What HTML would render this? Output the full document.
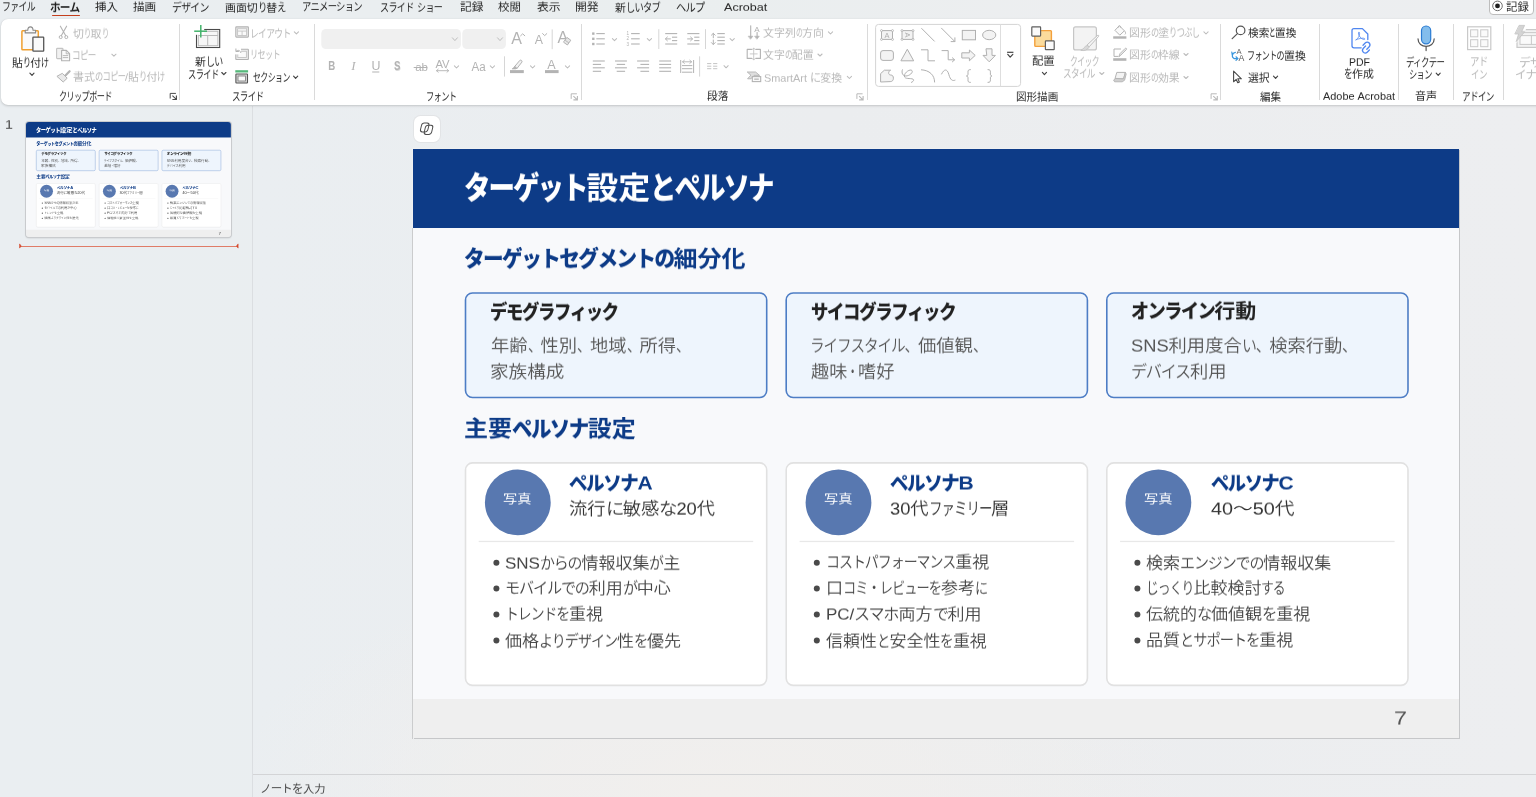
<!DOCTYPE html><html lang="ja"><head><meta charset="utf-8"><title>PowerPoint</title><style>
*{margin:0;padding:0;box-sizing:border-box}
html,body{width:1536px;height:797px;overflow:hidden}
body{position:relative;font-family:"Liberation Sans","Noto Sans CJK JP",sans-serif;background:linear-gradient(90deg,#eaeef1 0%,#eaeeef 45%,#edeef0 75%,#eceef0 100%);-webkit-font-smoothing:antialiased}
.t{position:absolute;white-space:nowrap;line-height:1;height:1em;will-change:transform}
.t b{font-weight:inherit;display:inline-block;white-space:nowrap}
.t b.n{letter-spacing:-.075em}
.t b i{font-style:normal;display:inline-block;white-space:nowrap;transform-origin:0 50%}
.a{position:absolute}
svg{position:absolute;overflow:visible}

#ribbon{left:1px;top:19px;width:1540px;height:85.5px;background:#fff;border-radius:7px 0 0 7px;box-shadow:0 1px 2.5px rgba(0,0,0,.17),0 0 1px rgba(0,0,0,.1)}
#canvas{left:252px;top:105px;width:1284px;height:692px;background:radial-gradient(ellipse 38% 34% at 36% 100%,#f1efed 0%,rgba(241,239,237,.6) 50%,rgba(241,239,237,0) 100%),linear-gradient(90deg,#eaeef1 0%,#ebedef 45%,#edeef0 100%)}
.sep{width:1px;background:#dadada;top:23.5px;height:76px}
.slide{width:1046.3px;height:588.8px;background:#f8f9fb;overflow:hidden}
.slide .hd{left:0;top:0;width:100%;height:78.6px;background:#0d3b87}
.slide .ft{left:0;top:549.7px;width:100%;height:40px;background:#efefef}
.seg{top:143.6px;width:302.8px;height:105.8px;background:#eef5fd;border:1.4px solid #4f7dc4;border-radius:7.5px}
.per{top:313.5px;width:302px;height:223.5px;background:#fff;border:1px solid #dcdcdc;border-radius:7.5px;box-shadow:0 1px 2px rgba(0,0,0,.08)}
.cir{width:65.8px;height:65.8px;border-radius:50%;background:#5878b0;top:320.6px}
.dv{height:1.2px;background:#e7e7e7;top:391.9px;width:274.5px}
.dot{width:6px;height:6px;border-radius:50%;background:#444}
</style></head><body><div class="a" id="canvas"></div><div class="a" style="left:251.5px;top:106px;width:1px;height:691px;background:#dbdee1"></div><div class="a" style="left:253px;top:774px;width:1283px;height:1px;background:#d3d4d6"></div><div class="a" id="ribbon"></div><div class="a sep" style="left:179.0px"></div><div class="a sep" style="left:313.8px"></div><div class="a sep" style="left:581.1px"></div><div class="a sep" style="left:866.5px"></div><div class="a sep" style="left:1219.7px"></div><div class="a sep" style="left:1319.0px"></div><div class="a sep" style="left:1398.0px"></div><div class="a sep" style="left:1452.7px"></div><div class="a sep" style="left:1502.9px"></div><div class="a" style="left:51.5px;top:14.5px;width:28.3px;height:1.7px;border-radius:.9px;background:#c43e1c"></div><div class="a" style="left:1488.5px;top:-4px;width:45px;height:19.4px;background:#fff;border:1px solid #bdbdbd;border-radius:4px"></div><div class="a" style="left:26.4px;top:122.0px;width:205.0px;height:115.4px;border-radius:3px;overflow:hidden;box-shadow:0 0 0 1px #c9cbce,0 1px 2px rgba(0,0,0,.2)"><div class="a slide" style="left:0;top:0;transform:scale(0.19593);transform-origin:0 0"><div class="a hd"></div><div class="a ft"></div><svg width="1046.3" height="588.8" viewBox="0 0 1046.3 588.8" style="left:0;top:0"><rect x="52.50" y="144.00" width="301.2" height="104.5" rx="7" fill="#eef5fd" stroke="#4d7dc5" stroke-width="1.6"/><rect x="52.50" y="315.10" width="301.2" height="222.4" rx="7" fill="#000" opacity=".05"/><rect x="52.50" y="313.90" width="301.2" height="222.4" rx="7" fill="#fff" stroke="#e1e1e1" stroke-width="1.6"/><rect x="373.20" y="144.00" width="301.2" height="104.5" rx="7" fill="#eef5fd" stroke="#4d7dc5" stroke-width="1.6"/><rect x="373.20" y="315.10" width="301.2" height="222.4" rx="7" fill="#000" opacity=".05"/><rect x="373.20" y="313.90" width="301.2" height="222.4" rx="7" fill="#fff" stroke="#e1e1e1" stroke-width="1.6"/><rect x="693.80" y="144.00" width="301.2" height="104.5" rx="7" fill="#eef5fd" stroke="#4d7dc5" stroke-width="1.6"/><rect x="693.80" y="315.10" width="301.2" height="222.4" rx="7" fill="#000" opacity=".05"/><rect x="693.80" y="313.90" width="301.2" height="222.4" rx="7" fill="#fff" stroke="#e1e1e1" stroke-width="1.6"/><circle cx="104.80" cy="353.40" r="32.9" fill="#5878b0"/><circle cx="425.50" cy="353.40" r="32.9" fill="#5878b0"/><circle cx="745.40" cy="353.40" r="32.9" fill="#5878b0"/><rect x="65.70" y="391.80" width="274.5" height="1.3" fill="#e8e8e8"/><rect x="386.60" y="391.80" width="274.5" height="1.3" fill="#e8e8e8"/><rect x="707.10" y="391.80" width="274.5" height="1.3" fill="#e8e8e8"/><circle cx="83.40" cy="413.70" r="3" fill="#4a4a4a"/><circle cx="83.40" cy="439.60" r="3" fill="#4a4a4a"/><circle cx="83.40" cy="465.50" r="3" fill="#4a4a4a"/><circle cx="83.40" cy="491.60" r="3" fill="#4a4a4a"/><circle cx="403.80" cy="413.70" r="3" fill="#4a4a4a"/><circle cx="403.80" cy="439.60" r="3" fill="#4a4a4a"/><circle cx="403.80" cy="465.50" r="3" fill="#4a4a4a"/><circle cx="403.80" cy="491.60" r="3" fill="#4a4a4a"/><circle cx="724.40" cy="413.70" r="3" fill="#4a4a4a"/><circle cx="724.40" cy="439.60" r="3" fill="#4a4a4a"/><circle cx="724.40" cy="465.50" r="3" fill="#4a4a4a"/><circle cx="724.40" cy="491.60" r="3" fill="#4a4a4a"/></svg><div class="t" style="left:51.37px;top:22.49px;font-size:32px;color:#ffffff;transform:scaleY(0.975);font-weight:700"><b class="n" style="width:122.36px;font-weight:900"><i style="transform:scaleX(0.8267)">ターゲット</i></b><b>設定</b><b class="n" style="width:122.36px;font-weight:900"><i style="transform:scaleX(0.8267)">とペルソナ</i></b></div><div class="t" style="left:51.73px;top:97.73px;font-size:24px;color:#0d3b87;transform:scaleY(0.93);font-weight:700"><b class="n" style="width:209.60px;font-weight:900"><i style="transform:scaleX(0.8583)">ターゲットセグメントの</i></b><b>細分化</b></div><div class="t" style="left:51.85px;top:268.06px;font-size:24px;color:#0d3b87;transform:scaleY(0.93);font-weight:700"><b>主要</b><b class="n" style="width:75.69px;font-weight:900"><i style="transform:scaleX(0.8523)">ペルソナ</i></b><b>設定</b></div><div class="t" style="left:77.86px;top:151.65px;font-size:21px;color:#222222;transform:scaleY(0.93);font-weight:700"><b class="n" style="width:127.88px;font-weight:900"><i style="transform:scaleX(0.8251)">デモグラフィック</i></b></div><div class="t" style="left:78.00px;top:187.85px;font-size:18.3px;color:#555555;transform:scaleY(0.93);font-weight:350"><b>年齢</b><b class="n" style="width:12.94px"><i style="transform:scaleX(0.7647)">、</i></b><b>性別</b><b class="n" style="width:12.94px"><i style="transform:scaleX(0.7647)">、</i></b><b>地域</b><b class="n" style="width:12.94px"><i style="transform:scaleX(0.7647)">、</i></b><b>所得</b><b class="n" style="width:12.94px"><i style="transform:scaleX(0.7647)">、</i></b></div><div class="t" style="left:77.35px;top:213.65px;font-size:18.3px;color:#555555;transform:scaleY(0.93);font-weight:350"><b style="width:74.47px"><i style="transform:scaleX(1.0183)">家族構成</i></b></div><div class="t" style="left:398.70px;top:151.62px;font-size:21px;color:#222222;transform:scaleY(0.93);font-weight:700"><b class="n" style="width:144.22px;font-weight:900"><i style="transform:scaleX(0.8269)">サイコグラフィック</i></b></div><div class="t" style="left:397.44px;top:187.92px;font-size:18.3px;color:#555555;transform:scaleY(0.93);font-weight:350"><b class="n" style="width:108.00px"><i style="transform:scaleX(0.7983)">ライフスタイル、</i></b><b>価値観</b><b class="n" style="width:13.51px"><i style="transform:scaleX(0.7983)">、</i></b></div><div class="t" style="left:398.95px;top:213.64px;font-size:18.3px;color:#555555;transform:scaleY(0.93);font-weight:350"><b style="width:36.34px"><i style="transform:scaleX(0.9940)">趣味</i></b><b class="n" style="width:10.43px"><i style="transform:scaleX(0.6163)">・</i></b><b style="width:36.34px"><i style="transform:scaleX(0.9940)">嗜好</i></b></div><div class="t" style="left:718.79px;top:151.34px;font-size:21px;color:#222222;transform:scaleY(0.93);font-weight:700"><b class="n" style="width:83.31px;font-weight:900"><i style="transform:scaleX(0.8578)">オンライン</i></b><b>行動</b></div><div class="t" style="left:718.84px;top:187.85px;font-size:18.3px;color:#555555;transform:scaleY(0.93);font-weight:350"><b>SNS利用度合</b><b class="n" style="width:27.54px"><i style="transform:scaleX(0.8140)">い、</i></b><b>検索行動</b><b class="n" style="width:13.77px"><i style="transform:scaleX(0.8140)">、</i></b></div><div class="t" style="left:718.55px;top:213.44px;font-size:18.3px;color:#555555;transform:scaleY(0.93);font-weight:350"><b class="n" style="width:58.97px"><i style="transform:scaleX(0.8789)">デバイス</i></b><b>利用</b></div><div class="t" style="left:156.50px;top:322.50px;font-size:21px;color:#0d3b87;transform:scaleY(0.93);font-weight:700"><b class="n" style="width:68.41px;font-weight:900"><i style="transform:scaleX(0.8804)">ペルソナ</i></b><b>A</b></div><div class="t" style="left:156.25px;top:350.95px;font-size:18.3px;color:#333333;transform:scaleY(0.93);font-weight:350"><b>流行</b><b class="n" style="width:17.16px"><i style="transform:scaleX(1.0138)">に</i></b><b>敏感</b><b class="n" style="width:17.16px"><i style="transform:scaleX(1.0138)">な</i></b><b>20代</b></div><div class="t" style="left:477.50px;top:322.50px;font-size:21px;color:#0d3b87;transform:scaleY(0.93);font-weight:700"><b class="n" style="width:68.39px;font-weight:900"><i style="transform:scaleX(0.8801)">ペルソナ</i></b><b>B</b></div><div class="t" style="left:477.46px;top:350.84px;font-size:18.3px;color:#333333;transform:scaleY(0.93);font-weight:350"><b>30代</b><b class="n" style="width:62.37px"><i style="transform:scaleX(0.7377)">ファミリー</i></b><b>層</b></div><div class="t" style="left:798.25px;top:322.49px;font-size:21px;color:#0d3b87;transform:scaleY(0.93);font-weight:700"><b class="n" style="width:67.38px;font-weight:900"><i style="transform:scaleX(0.8671)">ペルソナ</i></b><b>C</b></div><div class="t" style="left:798.49px;top:351.08px;font-size:18.3px;color:#333333;transform:scaleY(0.93);font-weight:350"><b style="width:83.65px"><i style="transform:scaleX(1.0831)">40～50代</i></b></div><div class="t" style="left:92.60px;top:405.50px;font-size:17px;color:#444444;transform:scaleY(0.93);font-weight:350"><b>SNS</b><b class="n" style="width:41.44px"><i style="transform:scaleX(0.8782)">からの</i></b><b>情報収集</b><b class="n" style="width:13.82px"><i style="transform:scaleX(0.8782)">が</i></b><b>主</b></div><div class="t" style="left:92.60px;top:431.07px;font-size:17px;color:#444444;transform:scaleY(0.93);font-weight:350"><b class="n" style="width:83.83px"><i style="transform:scaleX(0.8884)">モバイルでの</i></b><b>利用</b><b class="n" style="width:13.98px"><i style="transform:scaleX(0.8884)">が</i></b><b>中心</b></div><div class="t" style="left:92.60px;top:457.03px;font-size:17px;color:#444444;transform:scaleY(0.93);font-weight:350"><b class="n" style="width:64.06px"><i style="transform:scaleX(0.8148)">トレンドを</i></b><b>重視</b></div><div class="t" style="left:92.60px;top:483.42px;font-size:17px;color:#444444;transform:scaleY(0.93);font-weight:350"><b>価格</b><b class="n" style="width:78.04px"><i style="transform:scaleX(0.8301)">よりデザイン</i></b><b>性</b><b class="n" style="width:13.06px"><i style="transform:scaleX(0.8301)">を</i></b><b>優先</b></div><div class="t" style="left:413.20px;top:405.31px;font-size:17px;color:#444444;transform:scaleY(0.93);font-weight:350"><b class="n" style="width:129.17px"><i style="transform:scaleX(0.8232)">コストパフォーマンス</i></b><b>重視</b></div><div class="t" style="left:413.20px;top:431.31px;font-size:17px;color:#444444;transform:scaleY(0.93);font-weight:350"><b>口</b><b class="n" style="width:97.94px"><i style="transform:scaleX(0.7784)">コミ・レビューを</i></b><b>参考</b><b class="n" style="width:12.25px"><i style="transform:scaleX(0.7784)">に</i></b></div><div class="t" style="left:413.20px;top:457.00px;font-size:17px;color:#444444;transform:scaleY(0.93);font-weight:350"><b>PC/</b><b class="n" style="width:44.18px"><i style="transform:scaleX(0.9466)">スマホ</i></b><b>両方</b><b class="n" style="width:14.89px"><i style="transform:scaleX(0.9466)">で</i></b><b>利用</b></div><div class="t" style="left:413.20px;top:483.51px;font-size:17px;color:#444444;transform:scaleY(0.93);font-weight:350"><b>信頼性</b><b class="n" style="width:12.45px"><i style="transform:scaleX(0.7915)">と</i></b><b>安全性</b><b class="n" style="width:12.45px"><i style="transform:scaleX(0.7915)">を</i></b><b>重視</b></div><div class="t" style="left:733.80px;top:405.51px;font-size:17px;color:#444444;transform:scaleY(0.93);font-weight:350"><b>検索</b><b class="n" style="width:83.37px"><i style="transform:scaleX(0.8835)">エンジンでの</i></b><b>情報収集</b></div><div class="t" style="left:733.80px;top:431.32px;font-size:17px;color:#444444;transform:scaleY(0.93);font-weight:350"><b class="n" style="width:47.43px"><i style="transform:scaleX(0.7540)">じっくり</i></b><b>比較検討</b><b class="n" style="width:23.72px"><i style="transform:scaleX(0.7540)">する</i></b></div><div class="t" style="left:733.80px;top:457.14px;font-size:17px;color:#444444;transform:scaleY(0.93);font-weight:350"><b>伝統的</b><b class="n" style="width:14.12px"><i style="transform:scaleX(0.8973)">な</i></b><b>価値観</b><b class="n" style="width:14.12px"><i style="transform:scaleX(0.8973)">を</i></b><b>重視</b></div><div class="t" style="left:733.80px;top:483.31px;font-size:17px;color:#444444;transform:scaleY(0.93);font-weight:350"><b>品質</b><b class="n" style="width:79.29px"><i style="transform:scaleX(0.8403)">とサポートを</i></b><b>重視</b></div><div class="t" style="left:90.70px;top:342.85px;font-size:13px;color:#ffffff;transform:scaleY(0.93)"><b style="width:28.40px"><i style="transform:scaleX(1.0915)">写真</i></b></div><div class="t" style="left:411.20px;top:342.85px;font-size:13px;color:#ffffff;transform:scaleY(0.93)"><b style="width:28.40px"><i style="transform:scaleX(1.0915)">写真</i></b></div><div class="t" style="left:731.20px;top:342.85px;font-size:13px;color:#ffffff;transform:scaleY(0.93)"><b style="width:28.40px"><i style="transform:scaleX(1.0915)">写真</i></b></div><div class="t" style="left:981.56px;top:559.27px;font-size:20px;color:#555555;transform:scaleY(0.93);font-weight:350"><b style="width:12.98px"><i style="transform:scaleX(1.1664)">7</i></b></div></div></div><div class="a" style="left:20px;top:245.5px;width:217.6px;height:1.4px;background:#e07c68"></div><svg width="240" height="10" viewBox="0 0 240 10" style="left:0;top:241.2px"><path d="M19.6 2.9L21.2 5L19.6 7.100zM238.100 2.900L236.500 5L238.100 7.100z" fill="#d4472a" stroke="#d4472a" stroke-width=".6"/></svg><div class="a" style="left:413.8px;top:115.8px;width:26px;height:26.1px;background:#fff;border-radius:6.5px;box-shadow:0 0 0 1px #e2e4e6"></div><div class="a" style="left:412.5px;top:149.1px;width:1046.3px;height:588.8px;box-shadow:1px 1px 0 0 #c6c7c9,-1px -1px 0 0 #eff0f1"><div class="a slide" style="left:0;top:0"><div class="a hd"></div><div class="a ft"></div><svg width="1046.3" height="588.8" viewBox="0 0 1046.3 588.8" style="left:0;top:0"><rect x="52.50" y="144.00" width="301.2" height="104.5" rx="7" fill="#eef5fd" stroke="#4d7dc5" stroke-width="1.6"/><rect x="52.50" y="315.10" width="301.2" height="222.4" rx="7" fill="#000" opacity=".05"/><rect x="52.50" y="313.90" width="301.2" height="222.4" rx="7" fill="#fff" stroke="#e1e1e1" stroke-width="1.6"/><rect x="373.20" y="144.00" width="301.2" height="104.5" rx="7" fill="#eef5fd" stroke="#4d7dc5" stroke-width="1.6"/><rect x="373.20" y="315.10" width="301.2" height="222.4" rx="7" fill="#000" opacity=".05"/><rect x="373.20" y="313.90" width="301.2" height="222.4" rx="7" fill="#fff" stroke="#e1e1e1" stroke-width="1.6"/><rect x="693.80" y="144.00" width="301.2" height="104.5" rx="7" fill="#eef5fd" stroke="#4d7dc5" stroke-width="1.6"/><rect x="693.80" y="315.10" width="301.2" height="222.4" rx="7" fill="#000" opacity=".05"/><rect x="693.80" y="313.90" width="301.2" height="222.4" rx="7" fill="#fff" stroke="#e1e1e1" stroke-width="1.6"/><circle cx="104.80" cy="353.40" r="32.9" fill="#5878b0"/><circle cx="425.50" cy="353.40" r="32.9" fill="#5878b0"/><circle cx="745.40" cy="353.40" r="32.9" fill="#5878b0"/><rect x="65.70" y="391.80" width="274.5" height="1.3" fill="#e8e8e8"/><rect x="386.60" y="391.80" width="274.5" height="1.3" fill="#e8e8e8"/><rect x="707.10" y="391.80" width="274.5" height="1.3" fill="#e8e8e8"/><circle cx="83.40" cy="413.70" r="3" fill="#4a4a4a"/><circle cx="83.40" cy="439.60" r="3" fill="#4a4a4a"/><circle cx="83.40" cy="465.50" r="3" fill="#4a4a4a"/><circle cx="83.40" cy="491.60" r="3" fill="#4a4a4a"/><circle cx="403.80" cy="413.70" r="3" fill="#4a4a4a"/><circle cx="403.80" cy="439.60" r="3" fill="#4a4a4a"/><circle cx="403.80" cy="465.50" r="3" fill="#4a4a4a"/><circle cx="403.80" cy="491.60" r="3" fill="#4a4a4a"/><circle cx="724.40" cy="413.70" r="3" fill="#4a4a4a"/><circle cx="724.40" cy="439.60" r="3" fill="#4a4a4a"/><circle cx="724.40" cy="465.50" r="3" fill="#4a4a4a"/><circle cx="724.40" cy="491.60" r="3" fill="#4a4a4a"/></svg><div class="t" style="left:51.37px;top:22.49px;font-size:32px;color:#ffffff;transform:scaleY(0.975);font-weight:700"><b class="n" style="width:122.36px;font-weight:900"><i style="transform:scaleX(0.8267)">ターゲット</i></b><b>設定</b><b class="n" style="width:122.36px;font-weight:900"><i style="transform:scaleX(0.8267)">とペルソナ</i></b></div><div class="t" style="left:51.73px;top:97.73px;font-size:24px;color:#0d3b87;transform:scaleY(0.93);font-weight:700"><b class="n" style="width:209.60px;font-weight:900"><i style="transform:scaleX(0.8583)">ターゲットセグメントの</i></b><b>細分化</b></div><div class="t" style="left:51.85px;top:268.06px;font-size:24px;color:#0d3b87;transform:scaleY(0.93);font-weight:700"><b>主要</b><b class="n" style="width:75.69px;font-weight:900"><i style="transform:scaleX(0.8523)">ペルソナ</i></b><b>設定</b></div><div class="t" style="left:77.86px;top:151.65px;font-size:21px;color:#222222;transform:scaleY(0.93);font-weight:700"><b class="n" style="width:127.88px;font-weight:900"><i style="transform:scaleX(0.8251)">デモグラフィック</i></b></div><div class="t" style="left:78.00px;top:187.85px;font-size:18.3px;color:#555555;transform:scaleY(0.93);font-weight:350"><b>年齢</b><b class="n" style="width:12.94px"><i style="transform:scaleX(0.7647)">、</i></b><b>性別</b><b class="n" style="width:12.94px"><i style="transform:scaleX(0.7647)">、</i></b><b>地域</b><b class="n" style="width:12.94px"><i style="transform:scaleX(0.7647)">、</i></b><b>所得</b><b class="n" style="width:12.94px"><i style="transform:scaleX(0.7647)">、</i></b></div><div class="t" style="left:77.35px;top:213.65px;font-size:18.3px;color:#555555;transform:scaleY(0.93);font-weight:350"><b style="width:74.47px"><i style="transform:scaleX(1.0183)">家族構成</i></b></div><div class="t" style="left:398.70px;top:151.62px;font-size:21px;color:#222222;transform:scaleY(0.93);font-weight:700"><b class="n" style="width:144.22px;font-weight:900"><i style="transform:scaleX(0.8269)">サイコグラフィック</i></b></div><div class="t" style="left:397.44px;top:187.92px;font-size:18.3px;color:#555555;transform:scaleY(0.93);font-weight:350"><b class="n" style="width:108.00px"><i style="transform:scaleX(0.7983)">ライフスタイル、</i></b><b>価値観</b><b class="n" style="width:13.51px"><i style="transform:scaleX(0.7983)">、</i></b></div><div class="t" style="left:398.95px;top:213.64px;font-size:18.3px;color:#555555;transform:scaleY(0.93);font-weight:350"><b style="width:36.34px"><i style="transform:scaleX(0.9940)">趣味</i></b><b class="n" style="width:10.43px"><i style="transform:scaleX(0.6163)">・</i></b><b style="width:36.34px"><i style="transform:scaleX(0.9940)">嗜好</i></b></div><div class="t" style="left:718.79px;top:151.34px;font-size:21px;color:#222222;transform:scaleY(0.93);font-weight:700"><b class="n" style="width:83.31px;font-weight:900"><i style="transform:scaleX(0.8578)">オンライン</i></b><b>行動</b></div><div class="t" style="left:718.84px;top:187.85px;font-size:18.3px;color:#555555;transform:scaleY(0.93);font-weight:350"><b>SNS利用度合</b><b class="n" style="width:27.54px"><i style="transform:scaleX(0.8140)">い、</i></b><b>検索行動</b><b class="n" style="width:13.77px"><i style="transform:scaleX(0.8140)">、</i></b></div><div class="t" style="left:718.55px;top:213.44px;font-size:18.3px;color:#555555;transform:scaleY(0.93);font-weight:350"><b class="n" style="width:58.97px"><i style="transform:scaleX(0.8789)">デバイス</i></b><b>利用</b></div><div class="t" style="left:156.50px;top:322.50px;font-size:21px;color:#0d3b87;transform:scaleY(0.93);font-weight:700"><b class="n" style="width:68.41px;font-weight:900"><i style="transform:scaleX(0.8804)">ペルソナ</i></b><b>A</b></div><div class="t" style="left:156.25px;top:350.95px;font-size:18.3px;color:#333333;transform:scaleY(0.93);font-weight:350"><b>流行</b><b class="n" style="width:17.16px"><i style="transform:scaleX(1.0138)">に</i></b><b>敏感</b><b class="n" style="width:17.16px"><i style="transform:scaleX(1.0138)">な</i></b><b>20代</b></div><div class="t" style="left:477.50px;top:322.50px;font-size:21px;color:#0d3b87;transform:scaleY(0.93);font-weight:700"><b class="n" style="width:68.39px;font-weight:900"><i style="transform:scaleX(0.8801)">ペルソナ</i></b><b>B</b></div><div class="t" style="left:477.46px;top:350.84px;font-size:18.3px;color:#333333;transform:scaleY(0.93);font-weight:350"><b>30代</b><b class="n" style="width:62.37px"><i style="transform:scaleX(0.7377)">ファミリー</i></b><b>層</b></div><div class="t" style="left:798.25px;top:322.49px;font-size:21px;color:#0d3b87;transform:scaleY(0.93);font-weight:700"><b class="n" style="width:67.38px;font-weight:900"><i style="transform:scaleX(0.8671)">ペルソナ</i></b><b>C</b></div><div class="t" style="left:798.49px;top:351.08px;font-size:18.3px;color:#333333;transform:scaleY(0.93);font-weight:350"><b style="width:83.65px"><i style="transform:scaleX(1.0831)">40～50代</i></b></div><div class="t" style="left:92.60px;top:405.50px;font-size:17px;color:#444444;transform:scaleY(0.93);font-weight:350"><b>SNS</b><b class="n" style="width:41.44px"><i style="transform:scaleX(0.8782)">からの</i></b><b>情報収集</b><b class="n" style="width:13.82px"><i style="transform:scaleX(0.8782)">が</i></b><b>主</b></div><div class="t" style="left:92.60px;top:431.07px;font-size:17px;color:#444444;transform:scaleY(0.93);font-weight:350"><b class="n" style="width:83.83px"><i style="transform:scaleX(0.8884)">モバイルでの</i></b><b>利用</b><b class="n" style="width:13.98px"><i style="transform:scaleX(0.8884)">が</i></b><b>中心</b></div><div class="t" style="left:92.60px;top:457.03px;font-size:17px;color:#444444;transform:scaleY(0.93);font-weight:350"><b class="n" style="width:64.06px"><i style="transform:scaleX(0.8148)">トレンドを</i></b><b>重視</b></div><div class="t" style="left:92.60px;top:483.42px;font-size:17px;color:#444444;transform:scaleY(0.93);font-weight:350"><b>価格</b><b class="n" style="width:78.04px"><i style="transform:scaleX(0.8301)">よりデザイン</i></b><b>性</b><b class="n" style="width:13.06px"><i style="transform:scaleX(0.8301)">を</i></b><b>優先</b></div><div class="t" style="left:413.20px;top:405.31px;font-size:17px;color:#444444;transform:scaleY(0.93);font-weight:350"><b class="n" style="width:129.17px"><i style="transform:scaleX(0.8232)">コストパフォーマンス</i></b><b>重視</b></div><div class="t" style="left:413.20px;top:431.31px;font-size:17px;color:#444444;transform:scaleY(0.93);font-weight:350"><b>口</b><b class="n" style="width:97.94px"><i style="transform:scaleX(0.7784)">コミ・レビューを</i></b><b>参考</b><b class="n" style="width:12.25px"><i style="transform:scaleX(0.7784)">に</i></b></div><div class="t" style="left:413.20px;top:457.00px;font-size:17px;color:#444444;transform:scaleY(0.93);font-weight:350"><b>PC/</b><b class="n" style="width:44.18px"><i style="transform:scaleX(0.9466)">スマホ</i></b><b>両方</b><b class="n" style="width:14.89px"><i style="transform:scaleX(0.9466)">で</i></b><b>利用</b></div><div class="t" style="left:413.20px;top:483.51px;font-size:17px;color:#444444;transform:scaleY(0.93);font-weight:350"><b>信頼性</b><b class="n" style="width:12.45px"><i style="transform:scaleX(0.7915)">と</i></b><b>安全性</b><b class="n" style="width:12.45px"><i style="transform:scaleX(0.7915)">を</i></b><b>重視</b></div><div class="t" style="left:733.80px;top:405.51px;font-size:17px;color:#444444;transform:scaleY(0.93);font-weight:350"><b>検索</b><b class="n" style="width:83.37px"><i style="transform:scaleX(0.8835)">エンジンでの</i></b><b>情報収集</b></div><div class="t" style="left:733.80px;top:431.32px;font-size:17px;color:#444444;transform:scaleY(0.93);font-weight:350"><b class="n" style="width:47.43px"><i style="transform:scaleX(0.7540)">じっくり</i></b><b>比較検討</b><b class="n" style="width:23.72px"><i style="transform:scaleX(0.7540)">する</i></b></div><div class="t" style="left:733.80px;top:457.14px;font-size:17px;color:#444444;transform:scaleY(0.93);font-weight:350"><b>伝統的</b><b class="n" style="width:14.12px"><i style="transform:scaleX(0.8973)">な</i></b><b>価値観</b><b class="n" style="width:14.12px"><i style="transform:scaleX(0.8973)">を</i></b><b>重視</b></div><div class="t" style="left:733.80px;top:483.31px;font-size:17px;color:#444444;transform:scaleY(0.93);font-weight:350"><b>品質</b><b class="n" style="width:79.29px"><i style="transform:scaleX(0.8403)">とサポートを</i></b><b>重視</b></div><div class="t" style="left:90.70px;top:342.85px;font-size:13px;color:#ffffff;transform:scaleY(0.93)"><b style="width:28.40px"><i style="transform:scaleX(1.0915)">写真</i></b></div><div class="t" style="left:411.20px;top:342.85px;font-size:13px;color:#ffffff;transform:scaleY(0.93)"><b style="width:28.40px"><i style="transform:scaleX(1.0915)">写真</i></b></div><div class="t" style="left:731.20px;top:342.85px;font-size:13px;color:#ffffff;transform:scaleY(0.93)"><b style="width:28.40px"><i style="transform:scaleX(1.0915)">写真</i></b></div><div class="t" style="left:981.56px;top:559.27px;font-size:20px;color:#555555;transform:scaleY(0.93);font-weight:350"><b style="width:12.98px"><i style="transform:scaleX(1.1664)">7</i></b></div></div></div><div class="a" style="left:411.5px;top:227.7px;width:1px;height:511.2px;background:#cbcccd"></div><svg width="1536" height="150" viewBox="0 0 1536 150" style="left:0;top:0"><rect x="21.90" y="30.80" width="16.40" height="18.90" rx="0.80" fill="#fafafa" stroke="#f0a030" stroke-width="1.50"/><path d="M25.2 32.9V30.2h2.6c0-2 1.1-3.3 2.6-3.3s2.6 1.3 2.6 3.3h2.6v2.7z" fill="#fafafa" stroke="#8a8a8a" stroke-width="1.10" stroke-linejoin="round" stroke-linecap="round" /><rect x="32.90" y="37.20" width="10.80" height="14.00" rx="0.60" fill="#fafafa" stroke="#555" stroke-width="1.30"/><path d="M29.9 73.2L32.0 75.4L34.0 73.2" fill="none" stroke="#444" stroke-width="1.15" stroke-linecap="round" stroke-linejoin="round"/><path d="M60.4 26.2L65.6 35.6M66.6 26.2L61.4 35.6" fill="none" stroke="#b3b3b3" stroke-width="1.10" stroke-linejoin="round" stroke-linecap="round" /><circle cx="60.7" cy="37.1" r="1.5" fill="none" stroke="#b3b3b3" stroke-width="1"/><circle cx="66.3" cy="37.1" r="1.5" fill="none" stroke="#b3b3b3" stroke-width="1"/><rect x="56.60" y="48.40" width="6.40" height="10.20" rx="0.80" fill="#f1f1f1" stroke="#c4c4c4" stroke-width="1.10"/><path d="M61.6 50.4h4.8l3.2 3.2v7.2h-8z" fill="#fafafa" stroke="#b3b3b3" stroke-width="1.10" stroke-linejoin="round" stroke-linecap="round" /><path d="M66.2 50.6v3.2h3.2M63.2 55.6h4.6M63.2 57.6h4.6" fill="none" stroke="#b3b3b3" stroke-width="0.90" stroke-linejoin="round" stroke-linecap="round" /><path d="M111.8 54.2L113.9 56.2L116.0 54.2" fill="none" stroke="#bcbcbc" stroke-width="1.05" stroke-linecap="round" stroke-linejoin="round"/><path d="M69.6 71.2l-4.4 4.6" fill="none" stroke="#b3b3b3" stroke-width="2.20" stroke-linejoin="round" stroke-linecap="round" /><path d="M62.6 73.6l4.6 4.6l-4 3.8l-6-5.4z" fill="#e9e9e9" stroke="#b3b3b3" stroke-width="1.00" stroke-linejoin="round" stroke-linecap="round" /><path d="M170.2 98.5V93.4H175.9" fill="none" stroke="#4a4a4a" stroke-width="1"/><path d="M172.4 95.7L176.3 99.4M176.4 95.5V99.5H172.4" fill="none" stroke="#4a4a4a" stroke-width="1.1"/><rect x="196.50" y="29.50" width="23.20" height="18.00" rx="0.00" fill="#fff" stroke="#4a4a4a" stroke-width="1.10"/><rect x="198.30" y="31.30" width="19.60" height="14.40" rx="0.00" fill="#f6f6f6" stroke="#b9b9b9" stroke-width="1.00"/><path d="M198.30 35.50L217.90 35.50" stroke="#b9b9b9" stroke-width="1.00" stroke-linecap="butt" fill="none"/><path d="M207.70 35.50L207.70 45.70" stroke="#b9b9b9" stroke-width="1.00" stroke-linecap="butt" fill="none"/><rect x="193.6" y="24.6" width="10.6" height="10.2" fill="#fff"/><path d="M194.20 31.20L207.00 31.20" stroke="#43b36b" stroke-width="1.50" stroke-linecap="butt" fill="none"/><path d="M200.80 25.00L200.80 37.60" stroke="#43b36b" stroke-width="1.50" stroke-linecap="butt" fill="none"/><path d="M221.8 72.5L223.8 74.7L225.9 72.5" fill="none" stroke="#444" stroke-width="1.15" stroke-linecap="round" stroke-linejoin="round"/><rect x="235.80" y="26.90" width="12.60" height="10.20" rx="0.60" fill="#ededed" stroke="#b3b3b3" stroke-width="1.10"/><rect x="237.60" y="28.70" width="9.00" height="6.80" rx="0.00" fill="#fafafa" stroke="#c4c4c4" stroke-width="0.90"/><path d="M237.60 31.10L246.60 31.10" stroke="#c4c4c4" stroke-width="0.90" stroke-linecap="butt" fill="none"/><path d="M242.10 31.10L242.10 35.50" stroke="#c4c4c4" stroke-width="0.90" stroke-linecap="butt" fill="none"/><path d="M294.3 31.8L296.4 33.9L298.5 31.8" fill="none" stroke="#bcbcbc" stroke-width="1.05" stroke-linecap="round" stroke-linejoin="round"/><rect x="235.80" y="49.30" width="12.60" height="10.20" rx="0.60" fill="#ededed" stroke="#b3b3b3" stroke-width="1.10"/><rect x="237.80" y="51.30" width="8.60" height="6.20" rx="0.00" fill="#fafafa" stroke="#c4c4c4" stroke-width="0.90"/><rect x="234.6" y="47.8" width="6.4" height="6.6" fill="#fff"/><path d="M236.2 51.2c1.6-1.6 4-1 4.6 1.4M235.9 48.9v2.6h2.6" fill="none" stroke="#b3b3b3" stroke-width="1.00" stroke-linejoin="round" stroke-linecap="round" /><rect x="235.3" y="70.2" width="12.8" height="2.3" fill="#55b87a"/><rect x="235.90" y="74.00" width="11.60" height="9.00" rx="0.50" fill="#d9d9d9" stroke="#555" stroke-width="1.10"/><rect x="238.00" y="76.00" width="7.40" height="5.00" rx="0.00" fill="#fafafa" stroke="#777" stroke-width="0.80"/><path d="M293.6 76.2L295.6 78.4L297.7 76.2" fill="none" stroke="#444" stroke-width="1.15" stroke-linecap="round" stroke-linejoin="round"/><rect x="321.30" y="28.90" width="139.60" height="20.20" rx="4.50" fill="#f0f0f0" stroke="none" stroke-width="0.00"/><rect x="462.30" y="28.90" width="43.60" height="20.20" rx="4.50" fill="#f0f0f0" stroke="none" stroke-width="0.00"/><path d="M452.4 37.8L454.9 40.6L457.4 37.8" fill="none" stroke="#bdbdbd" stroke-width="1.00" stroke-linecap="round" stroke-linejoin="round"/><path d="M497.5 37.8L500.0 40.6L502.5 37.8" fill="none" stroke="#bdbdbd" stroke-width="1.00" stroke-linecap="round" stroke-linejoin="round"/><text x="511.20" y="43.60" font-size="16.00" fill="#b3b3b3" font-weight="400" font-family="Liberation Sans,sans-serif" font-style="normal" text-anchor="start" >A</text><path d="M520.6 35.8l2.1-2l2.1 2" fill="none" stroke="#b3b3b3" stroke-width="1.00" stroke-linejoin="round" stroke-linecap="round" /><text x="534.70" y="43.60" font-size="12.30" fill="#b3b3b3" font-weight="400" font-family="Liberation Sans,sans-serif" font-style="normal" text-anchor="start" >A</text><path d="M542.6 33.6l2.1 2l2.1-2" fill="none" stroke="#b3b3b3" stroke-width="1.00" stroke-linejoin="round" stroke-linecap="round" /><path d="M552.20 29.40L552.20 49.20" stroke="#d6d6d6" stroke-width="1.00" stroke-linecap="butt" fill="none"/><text x="557.40" y="43.40" font-size="16.00" fill="#b3b3b3" font-weight="400" font-family="Liberation Sans,sans-serif" font-style="normal" text-anchor="start" >A</text><path d="M567.2 37.6l3.6 2.6l-3.4 4.8l-3.6-2.6z" fill="#e6e6e6" stroke="#b3b3b3" stroke-width="1.00" stroke-linejoin="round" stroke-linecap="round" /><path d="M565.20 40.30L568.90 42.90" stroke="#b3b3b3" stroke-width="0.90" stroke-linecap="butt" fill="none"/><text x="328.20" y="70.40" font-size="12.60" fill="#b3b3b3" font-weight="700" font-family="Liberation Sans,sans-serif" font-style="normal" text-anchor="start" textLength="7" lengthAdjust="spacingAndGlyphs">B</text><text x="351.20" y="70.40" font-size="13.00" fill="#b3b3b3" font-weight="400" font-family="Liberation Serif,sans-serif" font-style="italic" text-anchor="start" >I</text><text x="371.60" y="70.20" font-size="12.40" fill="#b3b3b3" font-weight="400" font-family="Liberation Sans,sans-serif" font-style="normal" text-anchor="start" >U</text><path d="M372.20 72.00L379.30 72.00" stroke="#b3b3b3" stroke-width="1.00" stroke-linecap="butt" fill="none"/><text x="394.60" y="70.90" font-size="12.60" fill="#dcdcdc" font-weight="700" font-family="Liberation Sans,sans-serif" font-style="normal" text-anchor="start" textLength="6.4" lengthAdjust="spacingAndGlyphs">S</text><text x="394.10" y="70.40" font-size="12.60" fill="#b3b3b3" font-weight="700" font-family="Liberation Sans,sans-serif" font-style="normal" text-anchor="start" textLength="6.4" lengthAdjust="spacingAndGlyphs">S</text><text x="415.20" y="70.60" font-size="11.50" fill="#b3b3b3" font-weight="400" font-family="Liberation Sans,sans-serif" font-style="normal" text-anchor="start" >ab</text><path d="M413.70 67.50L427.30 67.50" stroke="#b3b3b3" stroke-width="1.00" stroke-linecap="butt" fill="none"/><text x="435.40" y="67.90" font-size="10.60" fill="#b3b3b3" font-weight="400" font-family="Liberation Sans,sans-serif" font-style="normal" text-anchor="start" textLength="14.2" lengthAdjust="spacingAndGlyphs">AV</text><path d="M436.6 70.7h12M438.2 69.2l-1.7 1.5l1.7 1.5M447 69.2l1.7 1.5l-1.7 1.5" fill="none" stroke="#b3b3b3" stroke-width="0.90" stroke-linejoin="round" stroke-linecap="round" /><path d="M454.4 65.9L456.5 68.0L458.6 65.9" fill="none" stroke="#bcbcbc" stroke-width="1.05" stroke-linecap="round" stroke-linejoin="round"/><text x="471.60" y="70.80" font-size="12.00" fill="#b3b3b3" font-weight="400" font-family="Liberation Sans,sans-serif" font-style="normal" text-anchor="start" textLength="14.2" lengthAdjust="spacingAndGlyphs">Aa</text><path d="M490.3 65.9L492.4 68.0L494.5 65.9" fill="none" stroke="#bcbcbc" stroke-width="1.05" stroke-linecap="round" stroke-linejoin="round"/><path d="M504.50 56.30L504.50 76.60" stroke="#d6d6d6" stroke-width="1.00" stroke-linecap="butt" fill="none"/><rect x="510" y="70.1" width="13.8" height="3" fill="#b3b3b3"/><path d="M514.6 66.6l5.2-6.2c1-1 2.9 0.5 2.1 1.7l-4.8 6.2z" fill="#f2f2f2" stroke="#b3b3b3" stroke-width="1.00" stroke-linejoin="round" stroke-linecap="round" /><path d="M514.6 66.6l-2.6 2.4h3.6l1.5-.8z" fill="#b3b3b3" stroke="#b3b3b3" stroke-width="0.60" stroke-linejoin="round" stroke-linecap="round" /><path d="M530.5 65.9L532.6 68.0L534.7 65.9" fill="none" stroke="#bcbcbc" stroke-width="1.05" stroke-linecap="round" stroke-linejoin="round"/><text x="547.30" y="68.90" font-size="12.60" fill="#b3b3b3" font-weight="400" font-family="Liberation Sans,sans-serif" font-style="normal" text-anchor="start" >A</text><rect x="545" y="70.1" width="13.6" height="3" fill="#b3b3b3"/><path d="M565.4 65.9L567.5 68.0L569.6 65.9" fill="none" stroke="#bcbcbc" stroke-width="1.05" stroke-linecap="round" stroke-linejoin="round"/><path d="M571.2 98.9V93.8H576.9" fill="none" stroke="#b9b9b9" stroke-width="1"/><path d="M573.4 96.1L577.3 99.8M577.4 95.9V99.9H573.4" fill="none" stroke="#b9b9b9" stroke-width="1.1"/><rect x="592.1" y="32.4" width="2.4" height="2.4" fill="#b3b3b3"/><path d="M596.30 33.60L604.80 33.60" stroke="#b3b3b3" stroke-width="1.10" stroke-linecap="butt" fill="none"/><rect x="592.1" y="37.6" width="2.4" height="2.4" fill="#b3b3b3"/><path d="M596.30 38.80L604.80 38.80" stroke="#b3b3b3" stroke-width="1.10" stroke-linecap="butt" fill="none"/><rect x="592.1" y="42.8" width="2.4" height="2.4" fill="#b3b3b3"/><path d="M596.30 44.00L604.80 44.00" stroke="#b3b3b3" stroke-width="1.10" stroke-linecap="butt" fill="none"/><path d="M612.4 38.6L614.5 40.6L616.6 38.6" fill="none" stroke="#bcbcbc" stroke-width="1.05" stroke-linecap="round" stroke-linejoin="round"/><text x="626.60" y="35.20" font-size="4.60" fill="#b3b3b3" font-weight="400" font-family="Liberation Sans,sans-serif" font-style="normal" text-anchor="start" >1</text><path d="M631.10 33.60L639.70 33.60" stroke="#b3b3b3" stroke-width="1.10" stroke-linecap="butt" fill="none"/><text x="626.60" y="40.40" font-size="4.60" fill="#b3b3b3" font-weight="400" font-family="Liberation Sans,sans-serif" font-style="normal" text-anchor="start" >2</text><path d="M631.10 38.80L639.70 38.80" stroke="#b3b3b3" stroke-width="1.10" stroke-linecap="butt" fill="none"/><text x="626.60" y="45.60" font-size="4.60" fill="#b3b3b3" font-weight="400" font-family="Liberation Sans,sans-serif" font-style="normal" text-anchor="start" >3</text><path d="M631.10 44.00L639.70 44.00" stroke="#b3b3b3" stroke-width="1.10" stroke-linecap="butt" fill="none"/><path d="M647.3 38.6L649.4 40.6L651.5 38.6" fill="none" stroke="#bcbcbc" stroke-width="1.05" stroke-linecap="round" stroke-linejoin="round"/><path d="M658.80 29.20L658.80 49.00" stroke="#d6d6d6" stroke-width="1.00" stroke-linecap="butt" fill="none"/><path d="M665.20 33.60L677.20 33.60" stroke="#b3b3b3" stroke-width="1.10" stroke-linecap="butt" fill="none"/><path d="M665.20 44.00L677.20 44.00" stroke="#b3b3b3" stroke-width="1.10" stroke-linecap="butt" fill="none"/><path d="M672.00 37.20L677.20 37.20" stroke="#b3b3b3" stroke-width="1.10" stroke-linecap="butt" fill="none"/><path d="M672.00 40.60L677.20 40.60" stroke="#b3b3b3" stroke-width="1.10" stroke-linecap="butt" fill="none"/><path d="M670.4 38.9h-4.8M667.4 37l-2 1.9l2 1.9" fill="none" stroke="#b3b3b3" stroke-width="1.00" stroke-linejoin="round" stroke-linecap="round" /><path d="M687.30 33.60L699.40 33.60" stroke="#b3b3b3" stroke-width="1.10" stroke-linecap="butt" fill="none"/><path d="M687.30 44.00L699.40 44.00" stroke="#b3b3b3" stroke-width="1.10" stroke-linecap="butt" fill="none"/><path d="M694.20 37.20L699.40 37.20" stroke="#b3b3b3" stroke-width="1.10" stroke-linecap="butt" fill="none"/><path d="M694.20 40.60L699.40 40.60" stroke="#b3b3b3" stroke-width="1.10" stroke-linecap="butt" fill="none"/><path d="M687.6 38.9h4.8M690.6 37l2 1.9l-2 1.9" fill="none" stroke="#b3b3b3" stroke-width="1.00" stroke-linejoin="round" stroke-linecap="round" /><path d="M705.50 29.20L705.50 49.00" stroke="#d6d6d6" stroke-width="1.00" stroke-linecap="butt" fill="none"/><path d="M717.30 33.60L724.80 33.60" stroke="#b3b3b3" stroke-width="1.10" stroke-linecap="butt" fill="none"/><path d="M717.30 37.20L724.80 37.20" stroke="#b3b3b3" stroke-width="1.10" stroke-linecap="butt" fill="none"/><path d="M717.30 40.60L724.80 40.60" stroke="#b3b3b3" stroke-width="1.10" stroke-linecap="butt" fill="none"/><path d="M717.30 44.00L724.80 44.00" stroke="#b3b3b3" stroke-width="1.10" stroke-linecap="butt" fill="none"/><path d="M713.3 33.4v4.4M711.4 35.2l1.9-1.9l1.9 1.9M713.3 40v4.4M711.4 42.6l1.9 1.9l1.9-1.9" fill="none" stroke="#b3b3b3" stroke-width="1.00" stroke-linejoin="round" stroke-linecap="round" /><path d="M730.1 38.6L732.2 40.6L734.3 38.6" fill="none" stroke="#bcbcbc" stroke-width="1.05" stroke-linecap="round" stroke-linejoin="round"/><path d="M592.80 61.00L604.80 61.00" stroke="#b3b3b3" stroke-width="1.10" stroke-linecap="butt" fill="none"/><path d="M615.00 61.00L626.90 61.00" stroke="#b3b3b3" stroke-width="1.10" stroke-linecap="butt" fill="none"/><path d="M637.10 61.00L649.10 61.00" stroke="#b3b3b3" stroke-width="1.10" stroke-linecap="butt" fill="none"/><path d="M659.20 61.00L671.10 61.00" stroke="#b3b3b3" stroke-width="1.10" stroke-linecap="butt" fill="none"/><path d="M592.80 64.40L601.10 64.40" stroke="#b3b3b3" stroke-width="1.10" stroke-linecap="butt" fill="none"/><path d="M616.70 64.40L625.10 64.40" stroke="#b3b3b3" stroke-width="1.10" stroke-linecap="butt" fill="none"/><path d="M640.40 64.40L649.10 64.40" stroke="#b3b3b3" stroke-width="1.10" stroke-linecap="butt" fill="none"/><path d="M659.20 64.40L671.10 64.40" stroke="#b3b3b3" stroke-width="1.10" stroke-linecap="butt" fill="none"/><path d="M592.80 67.80L604.80 67.80" stroke="#b3b3b3" stroke-width="1.10" stroke-linecap="butt" fill="none"/><path d="M615.00 67.80L626.90 67.80" stroke="#b3b3b3" stroke-width="1.10" stroke-linecap="butt" fill="none"/><path d="M637.10 67.80L649.10 67.80" stroke="#b3b3b3" stroke-width="1.10" stroke-linecap="butt" fill="none"/><path d="M659.20 67.80L671.10 67.80" stroke="#b3b3b3" stroke-width="1.10" stroke-linecap="butt" fill="none"/><path d="M592.80 71.30L601.10 71.30" stroke="#b3b3b3" stroke-width="1.10" stroke-linecap="butt" fill="none"/><path d="M616.70 71.30L625.10 71.30" stroke="#b3b3b3" stroke-width="1.10" stroke-linecap="butt" fill="none"/><path d="M640.40 71.30L649.10 71.30" stroke="#b3b3b3" stroke-width="1.10" stroke-linecap="butt" fill="none"/><path d="M659.20 71.30L671.10 71.30" stroke="#b3b3b3" stroke-width="1.10" stroke-linecap="butt" fill="none"/><path d="M680.70 60.00L680.70 73.00" stroke="#b3b3b3" stroke-width="1.00" stroke-linecap="butt" fill="none"/><path d="M693.60 60.00L693.60 73.00" stroke="#b3b3b3" stroke-width="1.00" stroke-linecap="butt" fill="none"/><path d="M682.6 61.8h9M684.4 60.2l-1.8 1.6l1.8 1.6M689.8 60.2l1.8 1.6l-1.8 1.6" fill="none" stroke="#b3b3b3" stroke-width="0.90" stroke-linejoin="round" stroke-linecap="round" /><path d="M682.00 65.60L692.30 65.60" stroke="#b3b3b3" stroke-width="1.00" stroke-linecap="butt" fill="none"/><path d="M682.00 68.70L692.30 68.70" stroke="#b3b3b3" stroke-width="1.00" stroke-linecap="butt" fill="none"/><path d="M682.00 72.20L692.30 72.20" stroke="#b3b3b3" stroke-width="1.00" stroke-linecap="butt" fill="none"/><path d="M699.60 56.30L699.60 76.60" stroke="#d6d6d6" stroke-width="1.00" stroke-linecap="butt" fill="none"/><path d="M707.10 63.60L711.30 63.60" stroke="#c4c4c4" stroke-width="1.00" stroke-linecap="butt" fill="none"/><path d="M713.10 63.60L717.30 63.60" stroke="#c4c4c4" stroke-width="1.00" stroke-linecap="butt" fill="none"/><path d="M707.10 66.20L711.30 66.20" stroke="#c4c4c4" stroke-width="1.00" stroke-linecap="butt" fill="none"/><path d="M713.10 66.20L717.30 66.20" stroke="#c4c4c4" stroke-width="1.00" stroke-linecap="butt" fill="none"/><path d="M707.10 68.70L711.30 68.70" stroke="#c4c4c4" stroke-width="1.00" stroke-linecap="butt" fill="none"/><path d="M713.10 68.70L717.30 68.70" stroke="#c4c4c4" stroke-width="1.00" stroke-linecap="butt" fill="none"/><path d="M724.0 65.7L726.1 67.8L728.2 65.7" fill="none" stroke="#bcbcbc" stroke-width="1.05" stroke-linecap="round" stroke-linejoin="round"/><path d="M750.7 25.8v11" fill="none" stroke="#b3b3b3" stroke-width="1.10" stroke-linejoin="round" stroke-linecap="round" /><path d="M748.5 36.2h4.4l-2.2 2.8z" fill="#b3b3b3" stroke="#b3b3b3" stroke-width="0.60" stroke-linejoin="round" stroke-linecap="round" /><text x="754.30" y="31.60" font-size="8.00" fill="#b3b3b3" font-weight="400" font-family="Liberation Sans,sans-serif" font-style="normal" text-anchor="start" >A</text><path d="M757.1 32.6v4" fill="none" stroke="#b3b3b3" stroke-width="1.10" stroke-linejoin="round" stroke-linecap="round" /><path d="M754.9 36.2h4.4l-2.2 2.8z" fill="#b3b3b3" stroke="#b3b3b3" stroke-width="0.60" stroke-linejoin="round" stroke-linecap="round" /><path d="M828.4 31.9L830.5 34.0L832.6 31.9" fill="none" stroke="#bcbcbc" stroke-width="1.05" stroke-linecap="round" stroke-linejoin="round"/><path d="M751.6 49.4h-4.4v9h4.4M755.8 49.4h4.6v9h-4.6" fill="none" stroke="#b3b3b3" stroke-width="1.10" stroke-linejoin="round" stroke-linecap="round" /><path d="M753.7 48.2v11.6M752.2 49.6l1.5-1.6l1.5 1.6M752.2 58.4l1.5 1.6l1.5-1.6M750.2 53.9h7" fill="none" stroke="#c4c4c4" stroke-width="0.90" stroke-linejoin="round" stroke-linecap="round" /><path d="M817.9 54.0L820.0 56.0L822.1 54.0" fill="none" stroke="#bcbcbc" stroke-width="1.05" stroke-linecap="round" stroke-linejoin="round"/><path d="M747.6 72h8l4 3.4h-5.6l-3 3.4h-3.4l3-3.4z" fill="#dedede" stroke="#b3b3b3" stroke-width="0.90" stroke-linejoin="round" stroke-linecap="round" /><rect x="752.30" y="76.60" width="8.40" height="5.00" rx="0.00" fill="#fafafa" stroke="#b3b3b3" stroke-width="1.10"/><path d="M754.20 79.20L758.80 79.20" stroke="#c4c4c4" stroke-width="1.60" stroke-linecap="butt" fill="none"/><path d="M847.3 76.4L849.4 78.5L851.5 76.4" fill="none" stroke="#bcbcbc" stroke-width="1.05" stroke-linecap="round" stroke-linejoin="round"/><path d="M856.9 98.9V93.8H862.6" fill="none" stroke="#b9b9b9" stroke-width="1"/><path d="M859.1 96.1L863.0 99.8M863.1 95.9V99.9H859.1" fill="none" stroke="#b9b9b9" stroke-width="1.1"/><rect x="875.60" y="24.40" width="145.00" height="62.00" rx="3.00" fill="#fff" stroke="#d4d4d4" stroke-width="1.00"/><path d="M1000.50 24.40L1000.50 86.40" stroke="#dedede" stroke-width="1.00" stroke-linecap="butt" fill="none"/><path d="M1007.10 52.30L1013.40 52.30" stroke="#444" stroke-width="1.20" stroke-linecap="butt" fill="none"/><path d="M1007.8 54.3L1010.2 57.1L1012.8 54.3" fill="none" stroke="#444" stroke-width="1.20" stroke-linecap="round" stroke-linejoin="round"/><rect x="881.50" y="30.60" width="11.00" height="8.80" rx="0.00" fill="#f3f3f3" stroke="#b0b0b0" stroke-width="1.00"/><circle cx="881.5" cy="30.6" r="1" fill="#fff" stroke="#b0b0b0" stroke-width=".8"/><circle cx="892.5" cy="30.6" r="1" fill="#fff" stroke="#b0b0b0" stroke-width=".8"/><circle cx="881.5" cy="39.4" r="1" fill="#fff" stroke="#b0b0b0" stroke-width=".8"/><circle cx="892.5" cy="39.4" r="1" fill="#fff" stroke="#b0b0b0" stroke-width=".8"/><text x="887.00" y="37.80" font-size="7.40" fill="#b0b0b0" font-weight="400" font-family="Liberation Sans,sans-serif" font-style="normal" text-anchor="middle" >A</text><rect x="902.00" y="30.60" width="11.00" height="8.80" rx="0.00" fill="#f3f3f3" stroke="#b0b0b0" stroke-width="1.00"/><circle cx="902.0" cy="30.6" r="1" fill="#fff" stroke="#b0b0b0" stroke-width=".8"/><circle cx="913.0" cy="30.6" r="1" fill="#fff" stroke="#b0b0b0" stroke-width=".8"/><circle cx="902.0" cy="39.4" r="1" fill="#fff" stroke="#b0b0b0" stroke-width=".8"/><circle cx="913.0" cy="39.4" r="1" fill="#fff" stroke="#b0b0b0" stroke-width=".8"/><text x="0" y="0" font-size="7.4" fill="#b0b0b0" font-family="Liberation Sans,sans-serif" text-anchor="middle" transform="translate(904.8 35) rotate(90)">A</text><path d="M921.40 28.20L934.60 41.40" stroke="#b0b0b0" stroke-width="1.00" stroke-linecap="butt" fill="none"/><path d="M941.5 28.2l13.2 13.2M954.9 37.8v3.8h-3.8" fill="none" stroke="#b0b0b0" stroke-width="1.00" stroke-linejoin="round" stroke-linecap="round" /><rect x="962.30" y="30.40" width="13.20" height="9.40" rx="0.00" fill="#f3f3f3" stroke="#b0b0b0" stroke-width="1.00"/><ellipse cx="989.2" cy="35" rx="6.6" ry="4.7" fill="#f3f3f3" stroke="#b0b0b0" stroke-width="1"/><rect x="880.60" y="50.60" width="12.80" height="9.80" rx="2.40" fill="#f3f3f3" stroke="#b0b0b0" stroke-width="1.00"/><path d="M907.5 49.6l6.2 11.2h-12.4z" fill="#f3f3f3" stroke="#b0b0b0" stroke-width="1.00" stroke-linejoin="round" stroke-linecap="round" /><path d="M921.4 49.8h6.6v11h6.6" fill="none" stroke="#b0b0b0" stroke-width="1.00" stroke-linejoin="round" stroke-linecap="round" /><path d="M942 50.6h6.2v9.2h6.2M952.4 57.8l2.2 2l-2.2 2" fill="none" stroke="#b0b0b0" stroke-width="1.00" stroke-linejoin="round" stroke-linecap="round" /><path d="M962.2 52.8h7.2v-2.8l5.8 5.4l-5.8 5.4v-2.8h-7.2z" fill="#f3f3f3" stroke="#b0b0b0" stroke-width="1.00" stroke-linejoin="round" stroke-linecap="round" /><path d="M986.4 48.8h5.6v6.6h3.4l-6.2 6.4l-6.2-6.4h3.4z" fill="#f3f3f3" stroke="#b0b0b0" stroke-width="1.00" stroke-linejoin="round" stroke-linecap="round" /><path d="M880.6 81.6v-8l3.8-3.4h6.2c-2.6 1.2-2.6 4.6 0 4.8 2 0 2.8 1.2 2.8 3.200s-1 3.4-2.8 3.400z" fill="#f3f3f3" stroke="#b0b0b0" stroke-width="1.00" stroke-linejoin="round" stroke-linecap="round" /><path d="M902.4 69.800c-1.2 3.2 0.4 6.2 3.4 6.2 3.6 0 7.6-3.6 6.2-5.4-1.6-2-7.6 1.6-7.6 5.4 0 3.6 6 1.8 8.6 3.2 1.6 0.8 0 2.6-1.6 3.2" fill="none" stroke="#b0b0b0" stroke-width="1.00" stroke-linejoin="round" stroke-linecap="round" /><path d="M921.4 69.800c8 0.4 13.2 5.2 13.2 12.2" fill="none" stroke="#b0b0b0" stroke-width="1.00" stroke-linejoin="round" stroke-linecap="round" /><path d="M941.6 74c2.6-5.4 5.6-5.4 7.2 0.4 1.6 5.8 3.6 6.8 6.2 5.8" fill="none" stroke="#b0b0b0" stroke-width="1.00" stroke-linejoin="round" stroke-linecap="round" /><path d="M970.4 69.600c-2.4 0-2.4 1-2.4 2.600v1.800c0 1.2-0.4 1.8-1.6 2 1.2 0.2 1.6 0.8 1.6 2v1.800c0 1.6 0 2.6 2.4 2.6" fill="none" stroke="#b0b0b0" stroke-width="1.00" stroke-linejoin="round" stroke-linecap="round" /><path d="M988 69.600c2.4 0 2.4 1 2.4 2.600v1.800c0 1.2 0.4 1.8 1.6 2-1.2 0.2-1.6 0.8-1.6 2v1.800c0 1.6 0 2.6-2.4 2.6" fill="none" stroke="#b0b0b0" stroke-width="1.00" stroke-linejoin="round" stroke-linecap="round" /><rect x="1034.80" y="30.60" width="16.60" height="15.80" rx="0.80" fill="#fbdb9c" stroke="#f3a03c" stroke-width="1.40"/><rect x="1031.80" y="26.90" width="8.80" height="9.20" rx="0.50" fill="#fafafa" stroke="#5f5f5f" stroke-width="1.20"/><rect x="1045.40" y="40.90" width="8.80" height="8.80" rx="0.50" fill="#fafafa" stroke="#5f5f5f" stroke-width="1.20"/><path d="M1042.4 72.4L1044.4 74.6L1046.5 72.4" fill="none" stroke="#444" stroke-width="1.15" stroke-linecap="round" stroke-linejoin="round"/><rect x="1073.60" y="26.90" width="22.80" height="23.00" rx="2.00" fill="#f3f3f3" stroke="#c6c6c6" stroke-width="1.20"/><path d="M1079 47.6l19.6-14.600l2 6l-16 12z" fill="#fff" opacity=".0"/><path d="M1097.4 35.400c0.8-0.8 1.8 0 1.2 1l-9.4 10.4-1.8-1.600z" fill="#f6f6f6" stroke="#c0c0c0" stroke-width="1.00" stroke-linejoin="round" stroke-linecap="round" /><path d="M1087.2 45.400l1.8 1.800c-1.4 3-5 3.8-8.2 3.2 2.6-0.8 3.2-4.2 6.4-5z" fill="#d9d9d9" stroke="#c0c0c0" stroke-width="0.80" stroke-linejoin="round" stroke-linecap="round" /><path d="M1099.7 72.5L1101.8 74.5L1103.9 72.5" fill="none" stroke="#bcbcbc" stroke-width="1.05" stroke-linecap="round" stroke-linejoin="round"/><rect x="1113.2" y="36.3" width="13.2" height="2.4" fill="#b3b3b3"/><path d="M1119.6 26l4.8 4.8-4.6 4.4-4.6-4.600z" fill="#fafafa" stroke="#b3b3b3" stroke-width="1.00" stroke-linejoin="round" stroke-linecap="round" /><path d="M1118.2 27.400c0-2.4 2.6-2.4 2.6 0M1124.8 31.200c1 1.4 1.2 2.2 0.4 3" fill="none" stroke="#b3b3b3" stroke-width="0.90" stroke-linejoin="round" stroke-linecap="round" /><path d="M1203.9 31.9L1206.0 34.0L1208.1 31.9" fill="none" stroke="#bcbcbc" stroke-width="1.05" stroke-linecap="round" stroke-linejoin="round"/><rect x="1113.2" y="58.2" width="13.2" height="2.6" fill="#b3b3b3"/><path d="M1120.6 49h-6.600v7.400h4" fill="none" stroke="#b3b3b3" stroke-width="1.00" stroke-linejoin="round" stroke-linecap="round" /><path d="M1119 56.400l1-2.8 5.2-5.200c0.8-0.8 2 0.4 1.2 1.200l-5.2 5.200z" fill="#e8e8e8" stroke="#b3b3b3" stroke-width="0.90" stroke-linejoin="round" stroke-linecap="round" /><path d="M1183.9 53.5L1186.0 55.5L1188.1 53.5" fill="none" stroke="#bcbcbc" stroke-width="1.05" stroke-linecap="round" stroke-linejoin="round"/><path d="M1117.2 72.400h8.200l-1.8 6.200h-8.200z" fill="#f3f3f3" stroke="#b3b3b3" stroke-width="1.00" stroke-linejoin="round" stroke-linecap="round" /><path d="M1115.4 78.600l-1.8 1.4 1 1.800h7.600l2.4-1.6 1.6-6.2-0.8-1.6-1.8 6.200z" fill="#cfcfcf" stroke="#b3b3b3" stroke-width="0.90" stroke-linejoin="round" stroke-linecap="round" /><path d="M1183.9 76.5L1186.0 78.5L1188.1 76.5" fill="none" stroke="#bcbcbc" stroke-width="1.05" stroke-linecap="round" stroke-linejoin="round"/><path d="M1211.1 98.9V93.8H1216.8" fill="none" stroke="#b9b9b9" stroke-width="1"/><path d="M1213.3 96.1L1217.2 99.8M1217.3 95.9V99.9H1213.3" fill="none" stroke="#b9b9b9" stroke-width="1.1"/><circle cx="1240.6" cy="30.4" r="4.3" fill="none" stroke="#555" stroke-width="1.2"/><path d="M1237.40 33.60L1232.20 38.60" stroke="#555" stroke-width="1.30" stroke-linecap="round" fill="none"/><text x="1236.40" y="54.00" font-size="7.60" fill="#666" font-weight="400" font-family="Liberation Sans,sans-serif" font-style="normal" text-anchor="start" >A</text><text x="1238.60" y="61.20" font-size="8.80" fill="#555" font-weight="400" font-family="Liberation Sans,sans-serif" font-style="normal" text-anchor="start" >A</text><path d="M1235.4 52.400c-3.4 0.6-4.2 4.6-1.2 6.200h3.600M1236 56.800l2 1.8-2 1.800M1232.2 54.600l-0.4-2.6" fill="none" stroke="#3a96dd" stroke-width="1.20" stroke-linejoin="round" stroke-linecap="round" /><path d="M1233.6 71.200v10.600l2.6-2.4 1.6 3.4 1.6-0.8-1.6-3.200h3.600z" fill="#fff" stroke="#4a4a4a" stroke-width="1.10" stroke-linejoin="round" stroke-linecap="round" /><path d="M1273.5 76.1L1275.6 78.3L1277.6 76.1" fill="none" stroke="#444" stroke-width="1.15" stroke-linecap="round" stroke-linejoin="round"/><path d="M1361.2 47.800h-7.200c-1.2 0-2-0.8-2-2v-15.200c0-1.2 0.8-2 2-2h8.400l5.4 5.400v5.6" fill="none" stroke="#4f86f0" stroke-width="1.30" stroke-linejoin="round" stroke-linecap="round" /><path d="M1356 39.800c2.6-1.4 4.2-5.6 3.4-7.4-0.6-1.2-1.6 0.6-0.4 3 1.2 2.4 3.4 4.2 5.4 4 1.2-0.2 0.2-1.4-2-1.2-2.2 0.2-5 0.8-6.4 1.600z" fill="none" stroke="#4f86f0" stroke-width="0.80" stroke-linejoin="round" stroke-linecap="round" /><path d="M1366.2 44.400l2.2-2.200c1.2-1.2 3-1.2 4 0s1 2.8-0.2 4l-2.2 2.200M1368.8 45.200l-2.2 2.200c-1.2 1.2-1.2 2.8-0.2 4s2.8 1.2 4 0l2.2-2.2" fill="none" stroke="#4f86f0" stroke-width="1.30" stroke-linejoin="round" stroke-linecap="round" transform="translate(-3.2 0.8)"/><rect x="1421.50" y="26.00" width="9.20" height="17.80" rx="4.60" fill="#83bdec" stroke="#2b7cd3" stroke-width="1.20"/><path d="M1418 38.800c0 10.2 16.2 10.2 16.2 0M1426.1 46.600v4" fill="none" stroke="#555" stroke-width="1.20" stroke-linejoin="round" stroke-linecap="round" /><path d="M1436.2 73.2L1438.2 75.4L1440.2 73.2" fill="none" stroke="#444" stroke-width="1.15" stroke-linecap="round" stroke-linejoin="round"/><rect x="1467.60" y="26.80" width="23.20" height="22.80" rx="0.00" fill="#fff" stroke="#c9c9c9" stroke-width="1.20"/><rect x="1470.60" y="29.80" width="7.20" height="7.00" rx="0.00" fill="#fafafa" stroke="#c9c9c9" stroke-width="1.00"/><rect x="1470.60" y="39.70" width="7.20" height="7.00" rx="0.00" fill="#fafafa" stroke="#c9c9c9" stroke-width="1.00"/><rect x="1480.70" y="29.80" width="7.20" height="7.00" rx="0.00" fill="#fafafa" stroke="#c9c9c9" stroke-width="1.00"/><rect x="1480.70" y="39.70" width="7.20" height="7.00" rx="0.00" fill="#fafafa" stroke="#c9c9c9" stroke-width="1.00"/><rect x="1517.00" y="29.60" width="26.00" height="17.80" rx="0.00" fill="#f3f3f3" stroke="#c9c9c9" stroke-width="1.20"/><path d="M1517.00 32.60L1543.00 32.60" stroke="#c9c9c9" stroke-width="1.00" stroke-linecap="butt" fill="none"/><rect x="1520.00" y="35.60" width="26.00" height="8.80" rx="0.00" fill="#fafafa" stroke="#c9c9c9" stroke-width="1.00"/><path d="M1531.40 35.60L1531.40 44.40" stroke="#c9c9c9" stroke-width="1.00" stroke-linecap="butt" fill="none"/><path d="M1514.2 24.400h11.600v6h-6.400l-2.2 12h-4z" fill="#fff"/><path d="M1519.4 25.400h5.200l-3 6.400h3.200l-8.6 9.8 2.4-7.600h-3.400z" fill="#d4d4d4" stroke="#c3c3c3" stroke-width="0.80" stroke-linejoin="round" stroke-linecap="round" /><circle cx="1497.5" cy="5.9" r="4.8" fill="none" stroke="#6e6e6e" stroke-width="1"/><circle cx="1497.5" cy="5.9" r="2.4" fill="#1e1e1e"/><rect x="-3.70" y="-4.40" width="7.40" height="8.80" rx="2.3" fill="none" stroke="#4d4d4d" stroke-width="1" transform="translate(424.70 127.50) skewX(-13) translate(0.00 0.00)"/><rect x="-3.70" y="-4.60" width="7.40" height="9.20" rx="2.3" fill="none" stroke="#4d4d4d" stroke-width="1" transform="translate(428.50 129.80) skewX(-13) translate(0.00 0.00)"/></svg><div class="t" style="left:2.33px;top:2.24px;font-size:10.9px;color:#242424;transform:scaleY(0.93)"><b class="n" style="width:32.94px"><i style="transform:scale(0.8173,1.1)">ファイル</i></b></div><div class="t" style="left:50.30px;top:2.86px;font-size:10.9px;color:#1f1f1f;transform:scaleY(0.93);font-weight:700"><b class="n" style="width:29.30px"><i style="transform:scale(0.9798,1.1)">ホーム</i></b></div><div class="t" style="left:95.31px;top:2.40px;font-size:10.9px;color:#242424;transform:scaleY(0.93)"><b style="width:23.07px"><i style="transform:scaleX(1.0585)">挿入</i></b></div><div class="t" style="left:133.47px;top:2.40px;font-size:10.9px;color:#242424;transform:scaleY(0.93)"><b style="width:23.23px"><i style="transform:scaleX(1.0657)">描画</i></b></div><div class="t" style="left:172.15px;top:2.65px;font-size:10.9px;color:#242424;transform:scaleY(0.93)"><b class="n" style="width:36.52px"><i style="transform:scale(0.9064,1.1)">デザイン</i></b></div><div class="t" style="left:225.00px;top:2.50px;font-size:10.9px;color:#242424;transform:scaleY(0.93)"><b>画面切</b><b class="n" style="width:8.62px"><i style="transform:scale(0.8554,1.1)">り</i></b><b>替</b><b class="n" style="width:8.62px"><i style="transform:scale(0.8554,1.1)">え</i></b></div><div class="t" style="left:301.91px;top:2.22px;font-size:10.9px;color:#242424;transform:scaleY(0.93)"><b class="n" style="width:59.96px"><i style="transform:scale(0.8557,1.1)">アニメーション</i></b></div><div class="t" style="left:380.21px;top:2.77px;font-size:10.9px;color:#242424;transform:scaleY(0.93)"><b class="n" style="width:33.54px"><i style="transform:scale(0.8323,1.1)">スライド</i></b><b>&nbsp;</b><b class="n" style="width:25.16px"><i style="transform:scale(0.8323,1.1)">ショー</i></b></div><div class="t" style="left:460.28px;top:2.42px;font-size:10.9px;color:#242424;transform:scaleY(0.93)"><b style="width:23.53px"><i style="transform:scaleX(1.0795)">記録</i></b></div><div class="t" style="left:498.46px;top:2.40px;font-size:10.9px;color:#242424;transform:scaleY(0.93)"><b style="width:22.98px"><i style="transform:scaleX(1.0542)">校閲</i></b></div><div class="t" style="left:536.64px;top:2.33px;font-size:10.9px;color:#242424;transform:scaleY(0.93)"><b style="width:23.70px"><i style="transform:scaleX(1.0874)">表示</i></b></div><div class="t" style="left:574.90px;top:2.32px;font-size:10.9px;color:#242424;transform:scaleY(0.93)"><b style="width:23.62px"><i style="transform:scaleX(1.0835)">開発</i></b></div><div class="t" style="left:614.65px;top:2.80px;font-size:10.9px;color:#242424;transform:scaleY(0.93)"><b>新</b><b class="n" style="width:34.14px"><i style="transform:scale(0.8472,1.1)">しいタブ</i></b></div><div class="t" style="left:676.49px;top:3.17px;font-size:10.9px;color:#242424;transform:scaleY(0.93)"><b class="n" style="width:28.37px"><i style="transform:scale(0.9383,1.1)">ヘルプ</i></b></div><div class="t" style="left:723.71px;top:1.95px;font-size:10.9px;color:#242424;transform:scaleY(0.93)"><b style="width:43.34px"><i style="transform:scaleX(1.1543)">Acrobat</i></b></div><div class="t" style="left:1506.19px;top:1.56px;font-size:10.9px;color:#242424;transform:scaleY(0.93)"><b style="width:22.82px"><i style="transform:scaleX(1.0471)">記録</i></b></div><div class="t" style="left:12.40px;top:57.69px;font-size:10.9px;color:#242424;transform:scaleY(0.93)"><b>貼</b><b class="n" style="width:7.42px"><i style="transform:scale(0.7358,1.1)">り</i></b><b>付</b><b class="n" style="width:7.42px"><i style="transform:scale(0.7358,1.1)">け</i></b></div><div class="t" style="left:73.18px;top:28.51px;font-size:10.9px;color:#b8b8b8;transform:scaleY(0.93)"><b>切</b><b class="n" style="width:6.70px"><i style="transform:scale(0.6644,1.1)">り</i></b><b>取</b><b class="n" style="width:6.70px"><i style="transform:scale(0.6644,1.1)">り</i></b></div><div class="t" style="left:71.75px;top:51.04px;font-size:10.9px;color:#b8b8b8;transform:scaleY(0.93)"><b class="n" style="width:23.75px"><i style="transform:scale(0.7855,1.1)">コピー</i></b></div><div class="t" style="left:73.10px;top:72.04px;font-size:10.9px;color:#b8b8b8;transform:scaleY(0.93)"><b>書式</b><b class="n" style="width:30.29px"><i style="transform:scale(0.7517,1.1)">のコピー</i></b><b>/貼</b><b class="n" style="width:7.58px"><i style="transform:scale(0.7517,1.1)">り</i></b><b>付</b><b class="n" style="width:7.58px"><i style="transform:scale(0.7517,1.1)">け</i></b></div><div class="t" style="left:58.72px;top:91.65px;font-size:10.9px;color:#242424;transform:scaleY(0.93)"><b class="n" style="width:52.78px"><i style="transform:scale(0.7485,1.1)">クリップボード</i></b></div><div class="t" style="left:194.75px;top:56.61px;font-size:10.9px;color:#242424;transform:scaleY(0.93)"><b>新</b><b class="n" style="width:16.56px"><i style="transform:scale(0.8214,1.1)">しい</i></b></div><div class="t" style="left:187.65px;top:69.62px;font-size:10.9px;color:#242424;transform:scaleY(0.93)"><b class="n" style="width:30.58px"><i style="transform:scale(0.7588,1.1)">スライド</i></b></div><div class="t" style="left:250.49px;top:29.08px;font-size:10.9px;color:#b8b8b8;transform:scaleY(0.93)"><b class="n" style="width:40.54px"><i style="transform:scale(0.8047,1.1)">レイアウト</i></b></div><div class="t" style="left:250.37px;top:50.38px;font-size:10.9px;color:#b8b8b8;transform:scaleY(0.93)"><b class="n" style="width:30.16px"><i style="transform:scale(0.7485,1.1)">リセット</i></b></div><div class="t" style="left:252.67px;top:73.15px;font-size:10.9px;color:#242424;transform:scaleY(0.93)"><b class="n" style="width:36.75px"><i style="transform:scale(0.7295,1.1)">セクション</i></b></div><div class="t" style="left:231.93px;top:91.81px;font-size:10.9px;color:#242424;transform:scaleY(0.93)"><b class="n" style="width:31.47px"><i style="transform:scale(0.7808,1.1)">スライド</i></b></div><div class="t" style="left:426.09px;top:91.52px;font-size:10.9px;color:#242424;transform:scaleY(0.93)"><b class="n" style="width:30.42px"><i style="transform:scale(0.7550,1.1)">フォント</i></b></div><div class="t" style="left:763.30px;top:28.40px;font-size:10.9px;color:#b8b8b8;transform:scaleY(0.93)"><b style="width:32.83px"><i style="transform:scaleX(1.0044)">文字列</i></b><b class="n" style="width:6.28px"><i style="transform:scale(0.6227,1.1)">の</i></b><b style="width:21.89px"><i style="transform:scaleX(1.0044)">方向</i></b></div><div class="t" style="left:763.30px;top:50.28px;font-size:10.9px;color:#b8b8b8;transform:scaleY(0.93)"><b>文字</b><b class="n" style="width:6.99px"><i style="transform:scale(0.6934,1.1)">の</i></b><b>配置</b></div><div class="t" style="left:763.50px;top:72.81px;font-size:10.9px;color:#b8b8b8;transform:scaleY(0.93)"><b>SmartArt&nbsp;</b><b class="n" style="width:10.32px"><i style="transform:scale(1.0238,1.1)">に</i></b><b>変換</b></div><div class="t" style="left:706.80px;top:91.24px;font-size:10.9px;color:#242424;transform:scaleY(0.93)"><b style="width:21.46px"><i style="transform:scaleX(0.9845)">段落</i></b></div><div class="t" style="left:1031.58px;top:56.48px;font-size:10.9px;color:#242424;transform:scaleY(0.93)"><b style="width:22.69px"><i style="transform:scaleX(1.0408)">配置</i></b></div><div class="t" style="left:1069.92px;top:56.77px;font-size:10.9px;color:#b8b8b8;transform:scaleY(0.93)"><b class="n" style="width:28.87px"><i style="transform:scale(0.7164,1.1)">クイック</i></b></div><div class="t" style="left:1062.93px;top:69.44px;font-size:10.9px;color:#b8b8b8;transform:scaleY(0.93)"><b class="n" style="width:31.79px"><i style="transform:scale(0.7889,1.1)">スタイル</i></b></div><div class="t" style="left:1129.20px;top:28.47px;font-size:10.9px;color:#b8b8b8;transform:scaleY(0.93)"><b>図形</b><b class="n" style="width:7.56px"><i style="transform:scale(0.7503,1.1)">の</i></b><b>塗</b><b class="n" style="width:30.32px"><i style="transform:scale(0.7503,1.1)">りつぶし</i></b></div><div class="t" style="left:1129.20px;top:49.89px;font-size:10.9px;color:#b8b8b8;transform:scaleY(0.93)"><b>図形</b><b class="n" style="width:6.96px"><i style="transform:scale(0.6907,1.1)">の</i></b><b>枠線</b></div><div class="t" style="left:1129.20px;top:72.87px;font-size:10.9px;color:#b8b8b8;transform:scaleY(0.93)"><b>図形</b><b class="n" style="width:7.13px"><i style="transform:scale(0.7070,1.1)">の</i></b><b>効果</b></div><div class="t" style="left:1015.81px;top:91.64px;font-size:10.9px;color:#242424;transform:scaleY(0.93)"><b style="width:42.26px"><i style="transform:scaleX(0.9697)">図形描画</i></b></div><div class="t" style="left:1248.37px;top:28.37px;font-size:10.9px;color:#242424;transform:scaleY(0.93)"><b style="width:21.32px"><i style="transform:scaleX(0.9781)">検索</i></b><b class="n" style="width:6.11px"><i style="transform:scale(0.6064,1.1)">と</i></b><b style="width:21.32px"><i style="transform:scaleX(0.9781)">置換</i></b></div><div class="t" style="left:1247.41px;top:50.73px;font-size:10.9px;color:#242424;transform:scaleY(0.93)"><b class="n" style="width:37.00px"><i style="transform:scale(0.7345,1.1)">フォントの</i></b><b>置換</b></div><div class="t" style="left:1248.23px;top:72.75px;font-size:10.9px;color:#242424;transform:scaleY(0.93)"><b style="width:21.65px"><i style="transform:scaleX(0.9933)">選択</i></b></div><div class="t" style="left:1260.48px;top:91.50px;font-size:10.9px;color:#242424;transform:scaleY(0.93)"><b style="width:21.10px"><i style="transform:scaleX(0.9680)">編集</i></b></div><div class="t" style="left:1348.80px;top:56.64px;font-size:10.9px;color:#242424;transform:scaleY(0.93)"><b style="width:21.02px"><i style="transform:scaleX(0.9644)">PDF</i></b></div><div class="t" style="left:1343.80px;top:69.03px;font-size:10.9px;color:#242424;transform:scaleY(0.93)"><b class="n" style="width:8.00px"><i style="transform:scale(0.7938,1.1)">を</i></b><b>作成</b></div><div class="t" style="left:1322.93px;top:90.95px;font-size:10.9px;color:#242424;transform:scaleY(0.93)"><b>Adobe&nbsp;Acrobat</b></div><div class="t" style="left:1406.30px;top:57.68px;font-size:10.9px;color:#242424;transform:scaleY(0.93)"><b class="n" style="width:38.30px"><i style="transform:scale(0.7721,1.1)">ディクテー</i></b></div><div class="t" style="left:1408.89px;top:69.52px;font-size:10.9px;color:#242424;transform:scaleY(0.93)"><b class="n" style="width:22.73px"><i style="transform:scale(0.7519,1.1)">ション</i></b></div><div class="t" style="left:1414.83px;top:91.36px;font-size:10.9px;color:#242424;transform:scaleY(0.93)"><b style="width:22.12px"><i style="transform:scaleX(1.0148)">音声</i></b></div><div class="t" style="left:1470.10px;top:57.14px;font-size:10.9px;color:#b8b8b8;transform:scaleY(0.93)"><b class="n" style="width:17.48px"><i style="transform:scale(0.8673,1.1)">アド</i></b></div><div class="t" style="left:1470.92px;top:69.63px;font-size:10.9px;color:#b8b8b8;transform:scaleY(0.93)"><b class="n" style="width:15.76px"><i style="transform:scale(0.7819,1.1)">イン</i></b></div><div class="t" style="left:1461.87px;top:91.50px;font-size:10.9px;color:#242424;transform:scaleY(0.93)"><b class="n" style="width:31.79px"><i style="transform:scale(0.7888,1.1)">アドイン</i></b></div><div class="t" style="left:1518.50px;top:57.67px;font-size:10.9px;color:#b8b8b8;transform:scaleY(0.93)"><b class="n" style="width:22.03px"><i style="transform:scale(1.0930,1.1)">デザ</i></b></div><div class="t" style="left:1514.70px;top:69.81px;font-size:10.9px;color:#b8b8b8;transform:scaleY(0.93)"><b class="n" style="width:31.77px"><i style="transform:scale(1.0585,1.1)">イナー</i></b></div><div class="t" style="left:259.74px;top:784.46px;font-size:10.9px;color:#444;transform:scaleY(0.93)"><b class="n" style="width:42.53px"><i style="transform:scale(1.0554,1.1)">ノートを</i></b><b style="width:22.55px"><i style="transform:scaleX(1.0347)">入力</i></b></div><div class="t" style="left:4.88px;top:118.41px;font-size:13px;color:#444;transform:scaleY(0.93)"><b style="width:7.92px"><i style="transform:scaleX(1.0943)">1</i></b></div></body></html>
